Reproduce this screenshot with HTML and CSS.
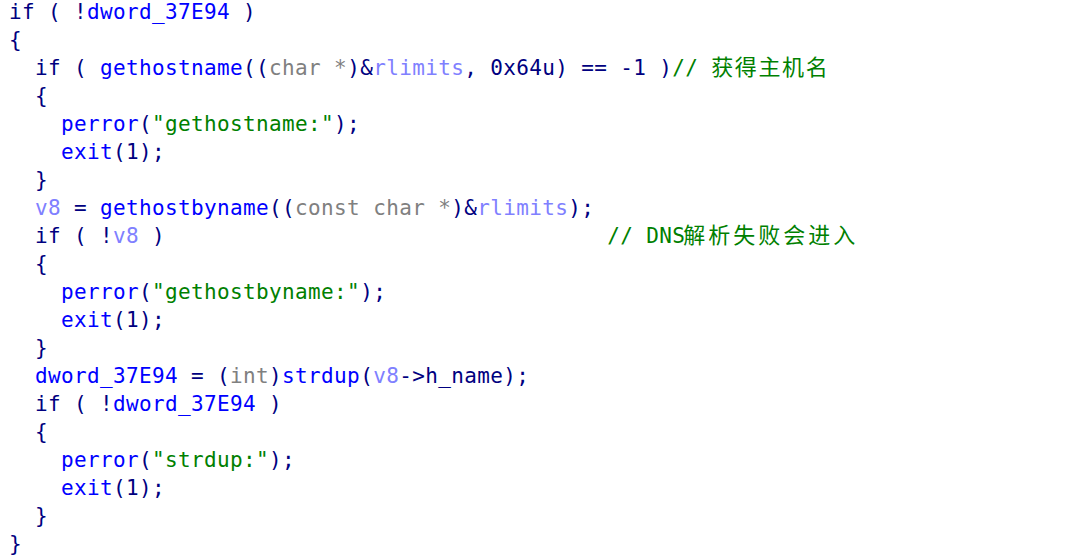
FILE: index.html
```html
<!DOCTYPE html>
<html>
<head>
<meta charset="utf-8">
<link rel="stylesheet" href="styles.css">
</head>
<body>
<div class="code">
<div class="ln">if ( !<span class="f">dword_37E94</span> )</div>
<div class="ln">{</div>
<div class="ln">  if ( <span class="f">gethostname</span>((<span class="t">char *</span>)&amp;<span class="v">rlimits</span>, 0x64u) == -1 )<span class="c">// <span class="cjk cjk1">获得主机名</span></span></div>
<div class="ln">  {</div>
<div class="ln">    <span class="f">perror</span>(<span class="s">"gethostname:"</span>);</div>
<div class="ln">    <span class="f">exit</span>(1);</div>
<div class="ln">  }</div>
<div class="ln">  <span class="v">v8</span> = <span class="f">gethostbyname</span>((<span class="t">const char *</span>)&amp;<span class="v">rlimits</span>);</div>
<div class="ln">  if ( !<span class="v">v8</span> )                                  <span class="c">// DNS<span class="cjk cjk2">解析失败会进入</span></span></div>
<div class="ln">  {</div>
<div class="ln">    <span class="f">perror</span>(<span class="s">"gethostbyname:"</span>);</div>
<div class="ln">    <span class="f">exit</span>(1);</div>
<div class="ln">  }</div>
<div class="ln">  <span class="f">dword_37E94</span> = (<span class="t">int</span>)<span class="f">strdup</span>(<span class="v">v8</span>-&gt;h_name);</div>
<div class="ln">  if ( !<span class="f">dword_37E94</span> )</div>
<div class="ln">  {</div>
<div class="ln">    <span class="f">perror</span>(<span class="s">"strdup:"</span>);</div>
<div class="ln">    <span class="f">exit</span>(1);</div>
<div class="ln">  }</div>
<div class="ln">}</div>
</div>
</body>
</html>
```
FILE: styles.css
```css
html, body {
  margin: 0;
  padding: 0;
  background: #ffffff;
}
.code {
  margin-top: -2px;
  padding-left: 9px;
  font-family: "DejaVu Sans Mono", "Noto Sans CJK SC", monospace;
  font-size: 21px;
  letter-spacing: 0.36px;
  color: #000080;
}
.ln {
  height: 28px;
  line-height: 28px;
  white-space: pre;
}
.f { color: #0000ff; }
.v { color: #8080ff; }
.t { color: #808080; }
.s { color: #008000; }
.c { color: #008000; }
.cjk {
  font-family: "Noto Sans CJK SC", sans-serif;
  font-size: 22px;
  line-height: 1;
}
.cjk1 { letter-spacing: 1.6px; }
.cjk2 { letter-spacing: 3px; margin-left: -2px; }
```
